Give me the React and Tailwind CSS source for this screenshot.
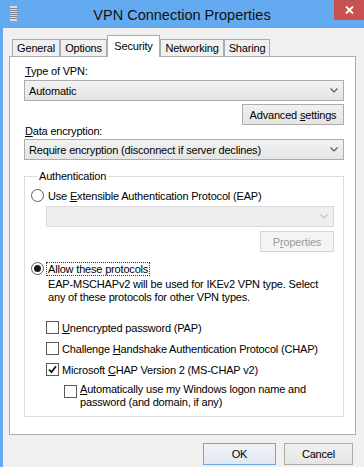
import { useState } from "react";

const font = { fontFamily: '"Liberation Sans", Arial, sans-serif' };

function Chevron({ disabled }) {
  return (
    <svg width="8" height="5" viewBox="0 0 8 5" className="shrink-0">
      <polyline points="0.5,0.5 4,4 7.5,0.5" fill="none" stroke={disabled ? "#c2c2c2" : "#5a5a5a"} strokeWidth="1.2" />
    </svg>
  );
}

function Select({ value, disabled, className = "" }) {
  return (
    <div
      className={
        "h-[21px] flex items-center justify-between pl-[4px] pr-[5px] border " +
        (disabled ? "border-[#d9d9d9] bg-[#efefef]" : "border-[#acacac] bg-gradient-to-b from-[#f2f2f2] to-[#e5e5e5]") +
        " " + className
      }
    >
      <span>{value}</span>
      <Chevron disabled={disabled} />
    </div>
  );
}

function Button({ children, disabled, primary, className = "" }) {
  return (
    <button
      className={
        "h-[21px] flex items-center justify-center border " +
        (disabled
          ? "border-[#d5d5d5] bg-[#f4f4f4] text-[#9a9a9a]"
          : primary
          ? "border-[#6ca7de] bg-gradient-to-b from-[#eef3f8] to-[#e1e8f0]"
          : "border-[#acacac] bg-gradient-to-b from-[#f0f0f0] to-[#e5e5e5]") +
        " " + className
      }
    >
      {children}
    </button>
  );
}

function Radio({ checked }) {
  return (
    <span className="w-[13px] h-[13px] rounded-full border border-[#5a5a5a] bg-white flex items-center justify-center shrink-0">
      {checked && <span className="w-[7px] h-[7px] rounded-full bg-[#1a1a1a]" />}
    </span>
  );
}

function Check({ checked, className = "" }) {
  return (
    <span className={"w-[13px] h-[13px] border border-[#5a5a5a] bg-white flex items-center justify-center shrink-0 " + className}>
      {checked && (
        <svg width="9" height="9" viewBox="0 0 9 9">
          <polyline points="1,4.5 3.5,7.2 8,1.2" fill="none" stroke="#111" strokeWidth="1.8" />
        </svg>
      )}
    </span>
  );
}

const tabs = [
  { name: "General", w: "w-[48px]" },
  { name: "Options", w: "w-[47px]" },
  { name: "Security", w: "w-[53px]", active: true },
  { name: "Networking", w: "w-[64px]" },
  { name: "Sharing", w: "w-[46px]" },
];

export default function App() {
  const [proto, setProto] = useState("allow");

  return (
    <div
      className="w-[364px] h-[467px] bg-[#64aaf0] flex flex-col overflow-hidden text-[11px] tracking-[-0.18px] text-black leading-[14px]"
      style={font}
    >
      {/* title bar */}
      <div className="h-[28px] shrink-0 relative flex items-center justify-center">
        <svg width="7" height="15" viewBox="0 0 7 15" className="absolute left-[10px] top-[6px]">
          <rect x="0" y="0" width="7" height="15" fill="#d9dde2" />
          <rect x="0" y="2" width="7" height="1" fill="#7c8590" />
          <rect x="0" y="4" width="7" height="1" fill="#7c8590" />
          <rect x="0" y="6" width="7" height="1" fill="#7c8590" />
          <rect x="0" y="8" width="7" height="1" fill="#7c8590" />
          <rect x="0" y="10" width="7" height="1" fill="#7c8590" />
          <rect x="0" y="12" width="7" height="1" fill="#7c8590" />
        </svg>
        <span className="text-[14.5px] tracking-normal text-[#111] mt-[1px]">VPN Connection Properties</span>
        <div className="absolute right-0 top-0 w-[30px] h-[20px] bg-[#c75050] flex items-center justify-center">
          <svg width="9" height="8" viewBox="0 0 9 8">
            <path d="M1 0.5 L8 7.5 M8 0.5 L1 7.5" stroke="#fff" strokeWidth="1.8" />
          </svg>
        </div>
      </div>

      {/* body */}
      <div className="flex-1 ml-[3px] bg-[#f0f0f0] pl-[6px] pt-[7px]">
        <div className="w-[347px]">
          <div className="h-[21px] flex items-end pl-[3px]">
            {tabs.map((t) =>
              t.active ? (
                <div
                  key={t.name}
                  className={t.w + " h-[22px] mb-[-1px] relative z-10 bg-white border border-b-0 border-[#acacac] flex items-start justify-center pt-[3px]"}
                >
                  {t.name}
                </div>
              ) : (
                <div
                  key={t.name}
                  className={t.w + " h-[17px] bg-[#f0f0f0] border border-b-0 border-[#acacac] flex items-center justify-center"}
                >
                  {t.name}
                </div>
              )
            )}
          </div>

          {/* tab panel */}
          <div className="h-[379px] border border-[#acacac] bg-white pl-[14px] pr-[11px] flex flex-col">
            <div className="mt-[7px] pl-[1px] h-[14px]">
              <u>T</u>ype of VPN:
            </div>
            <Select value="Automatic" className="mt-[2px]" />
            <div className="flex justify-end mt-[3px]">
              <Button className="w-[102px]">
                <span>
                  Advanced <u>s</u>ettings
                </span>
              </Button>
            </div>
            <div className="pl-[1px] h-[13px] leading-[13px]">
              <u>D</u>ata encryption:
            </div>
            <Select value="Require encryption (disconnect if server declines)" className="mt-[1px]" />

            <fieldset className="mt-[9px] border border-[#dcdcdc] pl-[6px] pr-[9px] pb-[7px]">
              <legend className="ml-[6px] px-[2px] leading-[14px]">Authentication</legend>
              <label className="mt-[5px] h-[15px] flex items-center gap-[4px]" onClick={() => setProto("eap")}>
                <Radio checked={proto === "eap"} />
                <span>
                  Use <u>E</u>xtensible Authentication Protocol (EAP)
                </span>
              </label>
              <Select value="" disabled className="mt-[3px] ml-[15px]" />
              <div className="flex justify-end mt-[4px]">
                <Button disabled className="w-[74px]">
                  <span>
                    P<u>r</u>operties
                  </span>
                </Button>
              </div>
              <label className="mt-[9px] h-[15px] flex items-center gap-[3px]" onClick={() => setProto("allow")}>
                <Radio checked={proto === "allow"} />
                <span className="outline outline-1 outline-dotted outline-[#333] leading-[12px] px-[1px]">
                  Allow these protocols
                </span>
              </label>
              <p className="mt-[2px] ml-[17px] w-[280px] leading-[13px]">
                EAP-MSCHAPv2 will be used for IKEv2 VPN type. Select any of these protocols for other VPN types.
              </p>

              <div className="mt-[13px] ml-[15px] flex flex-col">
                <label className="h-[21px] flex items-center gap-[3px]">
                  <Check />
                  <span>
                    <u>U</u>nencrypted password (PAP)
                  </span>
                </label>
                <label className="h-[21px] flex items-center gap-[3px]">
                  <Check />
                  <span>
                    Challenge <u>H</u>andshake Authentication Protocol (CHAP)
                  </span>
                </label>
                <label className="h-[21px] flex items-center gap-[3px]">
                  <Check checked />
                  <span>
                    Microsoft <u>C</u>HAP Version 2 (MS-CHAP v2)
                  </span>
                </label>
                <label className="mt-[3px] ml-[18px] flex items-start gap-[3px]">
                  <Check className="mt-[2px]" />
                  <span className="leading-[13px] w-[240px]">
                    <u>A</u>utomatically use my Windows logon name and password (and domain, if any)
                  </span>
                </label>
              </div>
            </fieldset>
          </div>

          {/* dialog buttons */}
          <div className="mt-[8px] flex justify-end gap-[8px] pr-[3px]">
            <Button primary className="w-[73px] h-[22px]">OK</Button>
            <Button className="w-[69px] h-[22px]">Cancel</Button>
          </div>
        </div>
      </div>
    </div>
  );
}
